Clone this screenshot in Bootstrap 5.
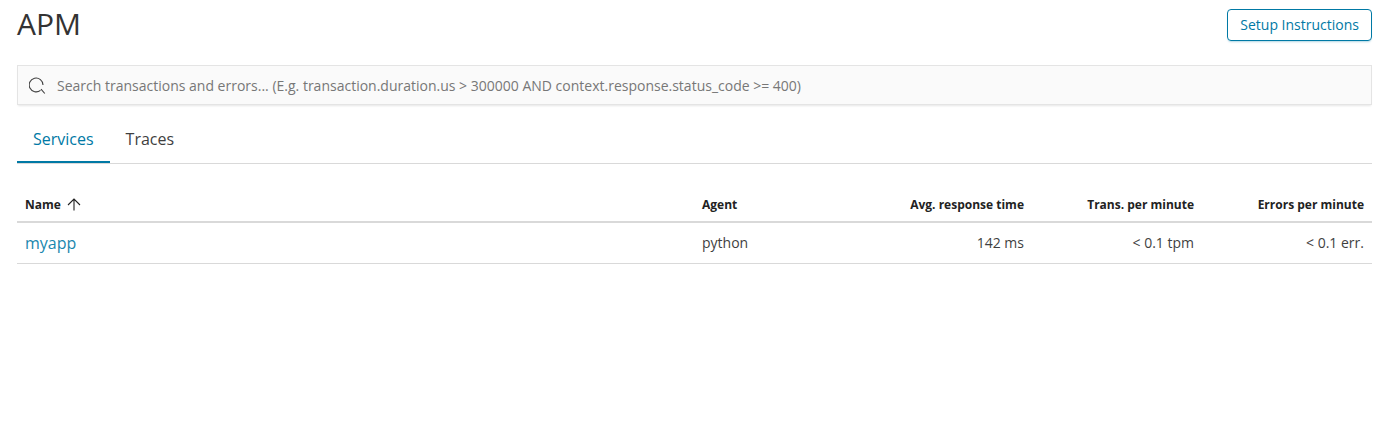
<!DOCTYPE html>
<html lang="en">
<head>
<meta charset="utf-8">
<title>APM</title>
<link href="https://cdn.jsdelivr.net/npm/bootstrap@5.3.0/dist/css/bootstrap.min.css" rel="stylesheet">
<style>
body { font-family: "Open Sans", sans-serif; color: #3f3f3f; background: #fff; }
.apm-page { padding: 9px 13px 0 17px; }
.apm-title { font-family: "Open Sans", sans-serif; font-size: 30px; font-weight: 400; line-height: 30px; color: #333; margin: 0 0 2px; }
.apm-setup { font-size: 14px; line-height: 20px; height: 32px; padding: 5px 12px; color: #0079a5; border: 1px solid #0079a5; border-radius: 4px; background: #fff; box-shadow: 0 2px 2px -1px rgba(0,121,165,.3); }
.apm-search { height: 40px; margin-top: 24px; background: #fafafa; border: 1px solid #e4e4e4; box-shadow: 0 2px 2px -1px rgba(0,0,0,.1); padding-left: 11px; }
.apm-search input { flex: 1; border: 0; outline: 0; background: transparent; padding: 0 0 0 11px; font-size: 14px; color: #3f3f3f; font-family: "Open Sans", sans-serif; }
.apm-search input::placeholder { color: #777; opacity: 1; }
.apm-tabs { margin-top: 17px; border-bottom: 1px solid #d9d9d9; }
.apm-tabs .nav-link { border: 0; border-radius: 0; margin: 0; padding: 0 16px; height: 41px; line-height: 34px; font-size: 16px; color: #3f3f3f; background: transparent; }
.apm-tabs .nav-link.active { color: #0079a5; background: transparent; border-bottom: 2px solid #0079a5; margin-bottom: -1px; height: 41px; }
.apm-table { table-layout: fixed; margin: 27px 0 0; width: 100%; font-size: 14px; color: #3f3f3f; }
.apm-table th { font-size: 12px; font-weight: 700; color: #222; padding: 0 8px 2px; height: 31px; vertical-align: middle; border-bottom: 2px solid #d9d9d9; }
.apm-table td { padding: 0 8px; height: 41px; vertical-align: middle; border-bottom: 1px solid #d9d9d9; color: #3f3f3f; }
.apm-table td a { font-size: 16px; color: #1a87ae; text-decoration: none; }
.col-agent { width: 168px; }
.col-metric { width: 170px; }
.apm-arrow { margin-left: 3px; vertical-align: -2px; }
</style>
</head>
<body>
<div class="apm-page">
  <div class="d-flex justify-content-between align-items-start">
    <h1 class="apm-title">APM</h1>
    <button type="button" class="btn apm-setup">Setup Instructions</button>
  </div>
  <div class="apm-search d-flex align-items-center">
    <svg width="17" height="17" viewBox="0 0 17 17" fill="none" stroke="#3f3f3f" stroke-width="1.1" aria-hidden="true"><path d="M11.5 13.3A6.9 6.9 0 1 1 14 8"/><path d="M12 12.2l3.8 4.3"/></svg>
    <input type="text" placeholder="Search transactions and errors... (E.g. transaction.duration.us &gt; 300000 AND context.response.status_code &gt;= 400)">
  </div>
  <ul class="nav nav-tabs apm-tabs">
    <li class="nav-item"><a class="nav-link active" href="#">Services</a></li>
    <li class="nav-item"><a class="nav-link" href="#">Traces</a></li>
  </ul>
  <table class="table apm-table">
    <colgroup><col><col class="col-agent"><col class="col-metric"><col class="col-metric"><col class="col-metric"></colgroup>
    <thead>
      <tr>
        <th>Name <svg class="apm-arrow" width="14" height="13" viewBox="0 0 14 13" fill="none" stroke="#222" stroke-width="1.1" aria-hidden="true"><path d="M7 12.5V1M1 7l6-6 6 6"/></svg></th>
        <th>Agent</th>
        <th class="text-end">Avg. response time</th>
        <th class="text-end">Trans. per minute</th>
        <th class="text-end">Errors per minute</th>
      </tr>
    </thead>
    <tbody>
      <tr>
        <td><a href="#">myapp</a></td>
        <td>python</td>
        <td class="text-end">142 ms</td>
        <td class="text-end">&lt; 0.1 tpm</td>
        <td class="text-end">&lt; 0.1 err.</td>
      </tr>
    </tbody>
  </table>
</div>
<script src="https://cdn.jsdelivr.net/npm/bootstrap@5.3.0/dist/js/bootstrap.bundle.min.js"></script>
</body>
</html>
